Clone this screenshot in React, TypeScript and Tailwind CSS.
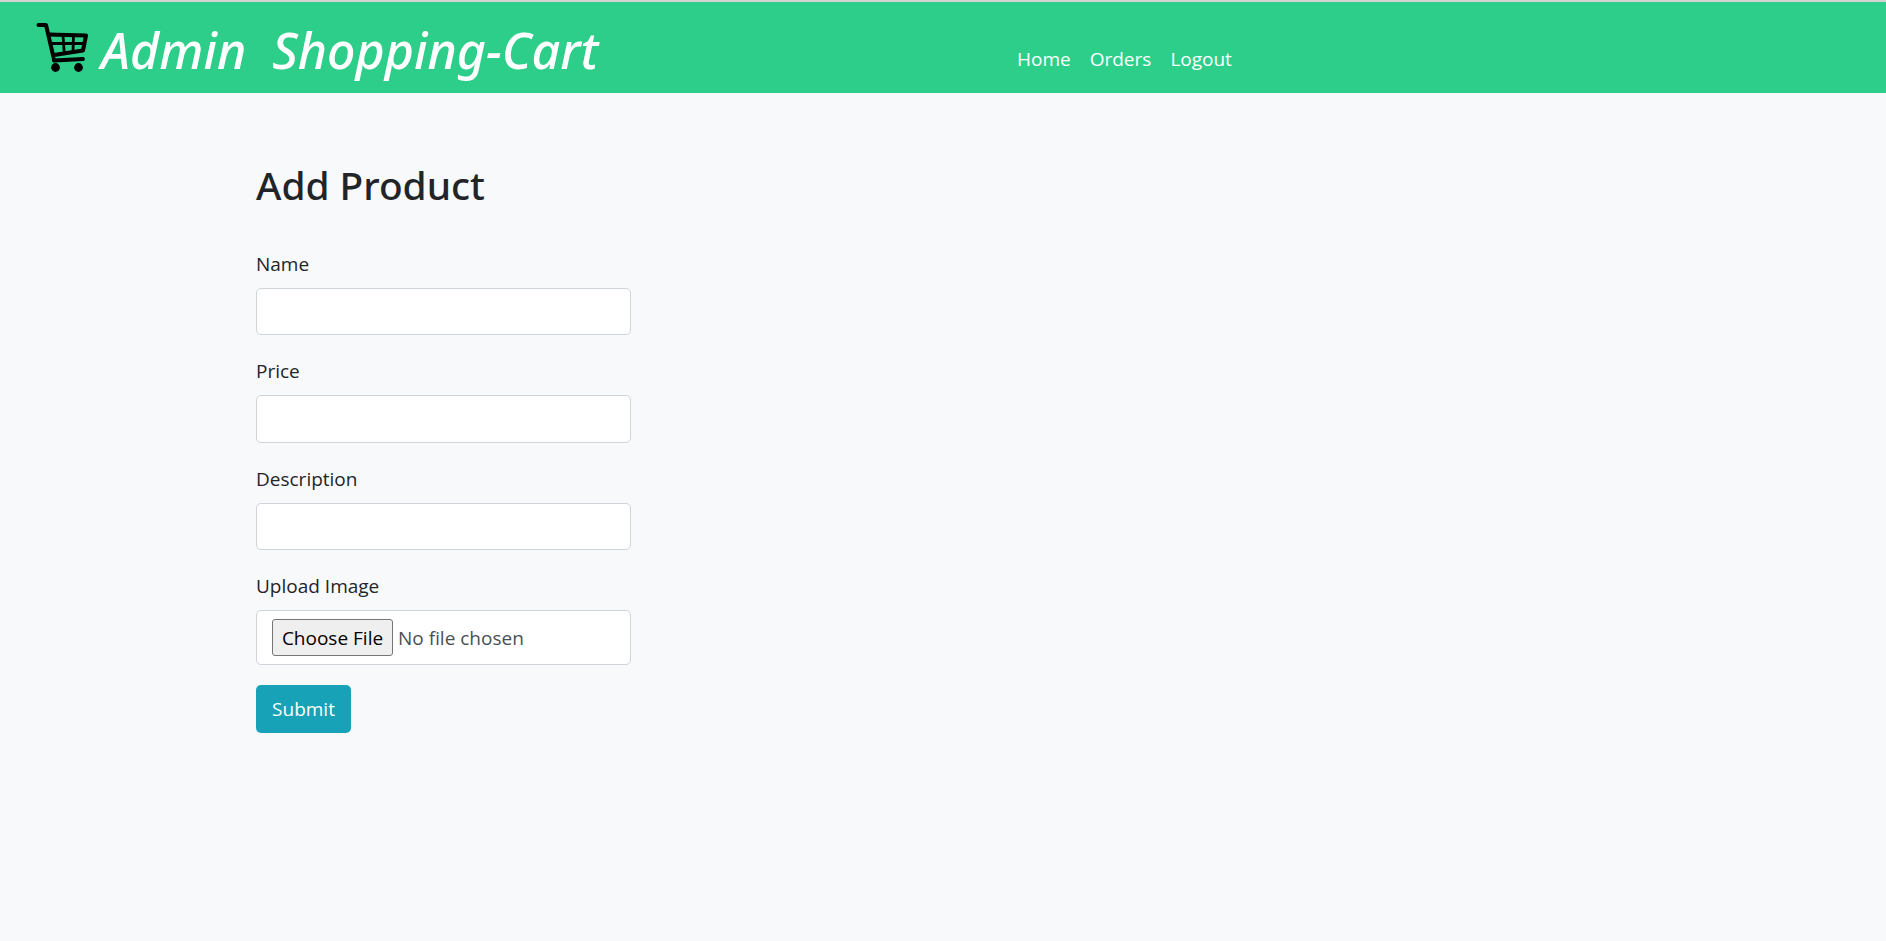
function CartIcon() {
  return (
    <svg width="54" height="52" viewBox="36 22 54 52" fill="none" stroke="#000">
      <path d="M38.5 25h7.5l7 30" strokeWidth="4" strokeLinecap="round" strokeLinejoin="round" />
      <path d="M48 34.5l38 1-3 15L54 55" strokeWidth="4" strokeLinejoin="round" />
      <path d="M50 43.5h35M63 35l1.3 19M73.5 35l-.5 17" strokeWidth="2.8" />
      <path d="M54 60.5 83 59" strokeWidth="3.8" strokeLinecap="round" />
      <path d="M53 55l1 5.5" strokeWidth="3.6" strokeLinecap="round" />
      <circle cx="55.5" cy="67.5" r="4.4" fill="#000" stroke="none" />
      <circle cx="78.5" cy="67.5" r="4.4" fill="#000" stroke="none" />
    </svg>
  )
}

function Field({ label, tall }: { label: string; tall?: boolean }) {
  return (
    <div className="mb-[22px]">
      <label className="block mb-[9px] text-[19px] leading-[29px] text-[#212529]">{label}</label>
      <input
        className={
          tall
            ? 'block w-[375px] h-[48px] bg-white border border-[#ced4da] rounded-[5px]'
            : 'block w-[375px] h-[47px] bg-white border border-[#ced4da] rounded-[5px]'
        }
      />
    </div>
  )
}

export default function App() {
  return (
    <div className="min-h-[941px] bg-[#f8f9fa] font-['Open_Sans','Noto_Sans',sans-serif]">
      <div className="h-[2px] bg-[#d4d4d4]" />
      <nav className="h-[91px] bg-[#2dce89] flex pl-[36px]">
        <div className="flex items-start pt-[20px] w-[981px]">
          <CartIcon />
          <span className="ml-[11px] -mt-[2px] text-[50px] leading-[60px] italic font-medium text-white whitespace-pre font-['Noto_Sans',sans-serif]">
            Admin  Shopping-Cart
          </span>
        </div>
        <div className="flex gap-[19px] pt-[43px] text-[19px] leading-[29px] text-white">
          <a>Home</a>
          <a>Orders</a>
          <a>Logout</a>
        </div>
      </nav>
      <main className="pl-[256px] pt-[69px]">
        <h2 className="text-[38.8px] leading-[46px] font-medium text-[#212529] mb-[42px] font-['Noto_Sans',sans-serif]">
          Add Product
        </h2>
        <Field label="Name" />
        <Field label="Price" tall />
        <Field label="Description" />
        <div className="mb-[20px]">
          <label className="block mb-[9px] text-[19px] leading-[29px] text-[#212529]">Upload Image</label>
          <div className="w-[375px] h-[55px] bg-white border border-[#ced4da] rounded-[5px] flex items-center pl-[15px] text-[19px] text-[#495057]">
            <button className="h-[37px] w-[121px] pt-[2px] bg-[#efefef] border border-[#767676] rounded-[3px] text-black mr-[5px]">
              Choose File
            </button>
            <span className="mt-[2px]">No file chosen</span>
          </div>
        </div>
        <button className="w-[95px] h-[48px] bg-[#17a2b8] rounded-[5px] text-white text-[19px]">Submit</button>
      </main>
    </div>
  )
}
